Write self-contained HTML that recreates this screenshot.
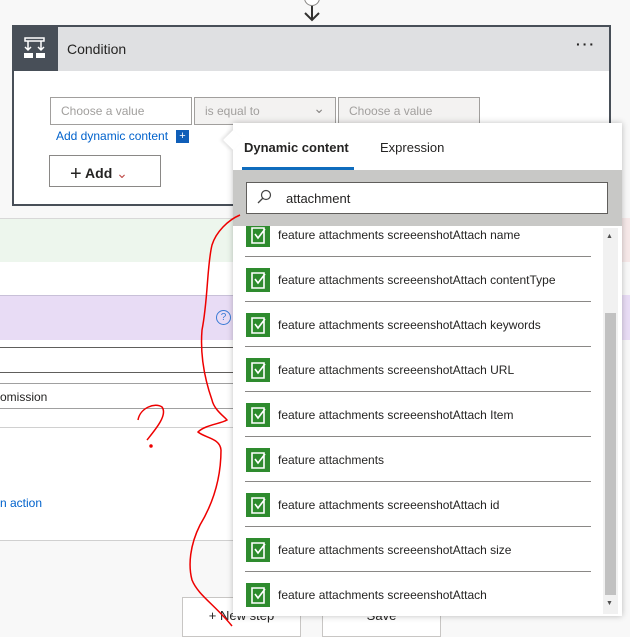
<!DOCTYPE html>
<html><head><style>
*{box-sizing:border-box;margin:0;padding:0}
body{width:630px;height:628px;overflow:hidden;background:#f8f8f8;font-family:"Liberation Sans",sans-serif;position:relative;font-size:13px;color:#252423}
.a{position:absolute}
.inp{position:absolute;top:97px;height:28px;border:1px solid #a19f9d;color:#a19f9d;font-size:12px;padding:6px 10px}
.it{position:absolute;left:0;width:100%;height:45px}
.it .ic{position:absolute;left:13px;top:11px;width:24px;height:24px;background:#2e8b2e}
.it .tx{position:absolute;left:45px;top:16px;font-size:12px;color:#252423}
.it .ln{position:absolute;left:12px;right:31px;bottom:0;height:1px;background:#8a8886}
</style></head><body>
<div class="a" style="left:0;top:218px;width:233px;height:44px;background:#edf6ed;border-top:1px solid #d8d8d8"></div>
<div class="a" style="left:0;top:262px;width:233px;height:33px;background:#fff"></div>
<div class="a" style="left:0;top:295px;width:233px;height:45px;background:#e8dcf5;border-top:1px solid #c8c0d8"></div>
<div class="a" style="left:0;top:340px;width:233px;height:201px;background:#fff;border-bottom:1px solid #d0d0d0"></div>
<div class="a" style="left:0;top:347px;width:233px;height:1px;background:#605e5c"></div>
<div class="a" style="left:0;top:372px;width:233px;height:1px;background:#605e5c"></div>
<div class="a" style="left:0;top:383px;width:233px;height:1px;background:#a0a0a0"></div>
<div class="a" style="left:0;top:408px;width:233px;height:1px;background:#a0a0a0"></div>
<div class="a" style="left:0;top:427px;width:233px;height:1px;background:#d0d0d0"></div>
<div class="a" style="left:0;top:390px;font-size:12px">omission</div>
<div class="a" style="left:0;top:496px;font-size:12px;color:#0062cc">n action</div>
<div class="a" style="left:216px;top:310px;width:15px;height:15px;border:1px solid #3a7bd5;border-radius:50%;color:#3a7bd5;font-size:10px;text-align:center;line-height:13px">?</div>
<div class="a" style="left:182px;top:597px;width:119px;height:40px;background:#fff;border:1px solid #c8c6c4;text-align:center;padding-top:10px">+ New step</div>
<div class="a" style="left:322px;top:597px;width:119px;height:40px;background:#fff;border:1px solid #c8c6c4;text-align:center;padding-top:10px">Save</div>
<div class="a" style="left:622px;top:218px;width:8px;height:44px;background:#f6e8e8"></div>
<div class="a" style="left:622px;top:295px;width:8px;height:45px;background:#e8dcf5"></div>
<div class="a" style="left:304px;top:-10px;width:16px;height:16px;border:1px solid #8a8886;border-radius:50%;background:#fff"></div>
<svg class="a" style="left:300px;top:6px" width="24" height="18"><path d="M12 0V14M5 7L12 14L19 7" stroke="#323130" stroke-width="2" fill="none"/></svg>
<!-- condition card -->
<div class="a" style="left:12px;top:25px;width:599px;height:181px;background:#fff;border:2px solid #484f58"></div>
<div class="a" style="left:14px;top:27px;width:595px;height:44px;background:#dfe0e2"></div>
<div class="a" style="left:14px;top:27px;width:44px;height:44px;background:#484f58"></div>
<svg class="a" style="left:22px;top:36px" width="26" height="26"><path d="M3 2H22V5H3Z M6 5V14 M19 5V14 M3 11L6 14L9 11 M16 11L19 14L22 11" stroke="#fff" stroke-width="1.5" fill="none"/><rect x="2" y="17" width="9" height="5" fill="#fff"/><rect x="14" y="17" width="9" height="5" fill="#fff"/></svg>
<div class="a" style="left:67px;top:41px;font-size:14px">Condition</div>
<div class="a" style="left:576px;top:36px;font-size:14px;letter-spacing:2px;font-weight:bold">···</div>
<div class="inp" style="left:50px;width:142px">Choose a value</div>
<div class="inp" style="left:194px;width:142px;background:#f3f2f1">is equal to<span style="position:absolute;right:10px;top:2px;font-size:14px;color:#8a8886">&#8964;</span></div>
<div class="inp" style="left:338px;width:142px;background:#f3f2f1">Choose a value</div>
<div class="a" style="left:56px;top:129px;font-size:12px;color:#0062cc">Add dynamic content</div>
<div class="a" style="left:176px;top:130px;width:13px;height:13px;background:#0f5eb8;color:#fff;font-size:11px;text-align:center;line-height:13px">+</div>
<div class="a" style="left:49px;top:155px;width:112px;height:32px;border:1px solid #8a8886;padding:5px 0 0 20px;font-size:14px;font-weight:bold"><span style="font-weight:normal;font-size:20px;position:relative;top:2px">+</span> Add <span style="color:#c0504d;font-weight:normal">&#8964;</span></div>
<!-- popup -->
<div class="a" style="left:233px;top:123px;width:389px;height:493px;background:#fff;box-shadow:0 0 6px rgba(0,0,0,.25)"></div>
<div class="a" style="left:226px;top:133px;width:14px;height:14px;background:#fff;transform:rotate(45deg);box-shadow:-2px 2px 3px rgba(0,0,0,.1)"></div>
<div class="a" style="left:244px;top:140px;font-size:13px;font-weight:bold">Dynamic content</div>
<div class="a" style="left:380px;top:140px;font-size:13px">Expression</div>
<div class="a" style="left:242px;top:167px;width:112px;height:3px;background:#0f6cbd"></div>
<div class="a" style="left:233px;top:170px;width:389px;height:56px;background:#c8c8c6"></div>
<div class="a" style="left:246px;top:182px;width:362px;height:32px;background:#fff;border:1px solid #605e5c"></div>
<svg class="a" style="left:256px;top:189px" width="16" height="16"><circle cx="10" cy="6" r="4.5" stroke="#444" stroke-width="1.2" fill="none"/><path d="M7 9L2 14" stroke="#444" stroke-width="1.3"/></svg>
<div class="a" style="left:286px;top:191px;font-size:13px">attachment</div>
<div class="a" style="left:233px;top:226px;width:389px;height:390px;overflow:hidden">
<div class="it" style="top:-14px"><div class="ic"></div><div class="tx">feature attachments screeenshotAttach name</div><div class="ln"></div></div>
<div class="it" style="top:31px"><div class="ic"></div><div class="tx">feature attachments screeenshotAttach contentType</div><div class="ln"></div></div>
<div class="it" style="top:76px"><div class="ic"></div><div class="tx">feature attachments screeenshotAttach keywords</div><div class="ln"></div></div>
<div class="it" style="top:121px"><div class="ic"></div><div class="tx">feature attachments screeenshotAttach URL</div><div class="ln"></div></div>
<div class="it" style="top:166px"><div class="ic"></div><div class="tx">feature attachments screeenshotAttach Item</div><div class="ln"></div></div>
<div class="it" style="top:211px"><div class="ic"></div><div class="tx">feature attachments</div><div class="ln"></div></div>
<div class="it" style="top:256px"><div class="ic"></div><div class="tx">feature attachments screeenshotAttach id</div><div class="ln"></div></div>
<div class="it" style="top:301px"><div class="ic"></div><div class="tx">feature attachments screeenshotAttach size</div><div class="ln"></div></div>
<div class="it" style="top:346px"><div class="ic"></div><div class="tx">feature attachments screeenshotAttach</div></div>
</div>
<div class="a" style="left:603px;top:228px;width:15px;height:386px;background:#f1f1f1"></div>
<div class="a" style="left:605px;top:313px;width:11px;height:282px;background:#c1c1c1"></div>
<div class="a" style="left:606px;top:233px;font-size:7px;color:#505050">▲</div>
<div class="a" style="left:606px;top:600px;font-size:7px;color:#505050">▼</div>
<svg class="a" style="left:246px;top:223px" width="24" height="390" fill="none" stroke="#fff" stroke-width="1.6">
<defs></defs>
<g><path d="M6 5H18V20H6Z M9 11L12 15L19 6"/></g>
<g transform="translate(0,45)"><path d="M6 5H18V20H6Z M9 11L12 15L19 6"/></g>
<g transform="translate(0,90)"><path d="M6 5H18V20H6Z M9 11L12 15L19 6"/></g>
<g transform="translate(0,135)"><path d="M6 5H18V20H6Z M9 11L12 15L19 6"/></g>
<g transform="translate(0,180)"><path d="M6 5H18V20H6Z M9 11L12 15L19 6"/></g>
<g transform="translate(0,225)"><path d="M6 5H18V20H6Z M9 11L12 15L19 6"/></g>
<g transform="translate(0,270)"><path d="M6 5H18V20H6Z M9 11L12 15L19 6"/></g>
<g transform="translate(0,315)"><path d="M6 5H18V20H6Z M9 11L12 15L19 6"/></g>
<g transform="translate(0,360)"><path d="M6 5H18V20H6Z M9 11L12 15L19 6"/></g>
</svg>
<svg class="a" style="left:0;top:0" width="630" height="628" fill="none" stroke="#e00" stroke-width="1.5">
<path d="M240 215C228 220 216 232 212 245C207 265 208 300 202 330C200 355 205 380 212 400C214 410 226 418 227 420C220 424 205 425 198 432C205 438 220 438 221 450C221 475 215 500 200 525C190 545 188 565 192 580C198 595 215 605 232 626"/>
<path d="M138 420C140 408 155 402 162 407C168 415 155 430 147 440"/>
<circle cx="151" cy="446" r="1" fill="#e00"/>
</svg>
</body></html>
